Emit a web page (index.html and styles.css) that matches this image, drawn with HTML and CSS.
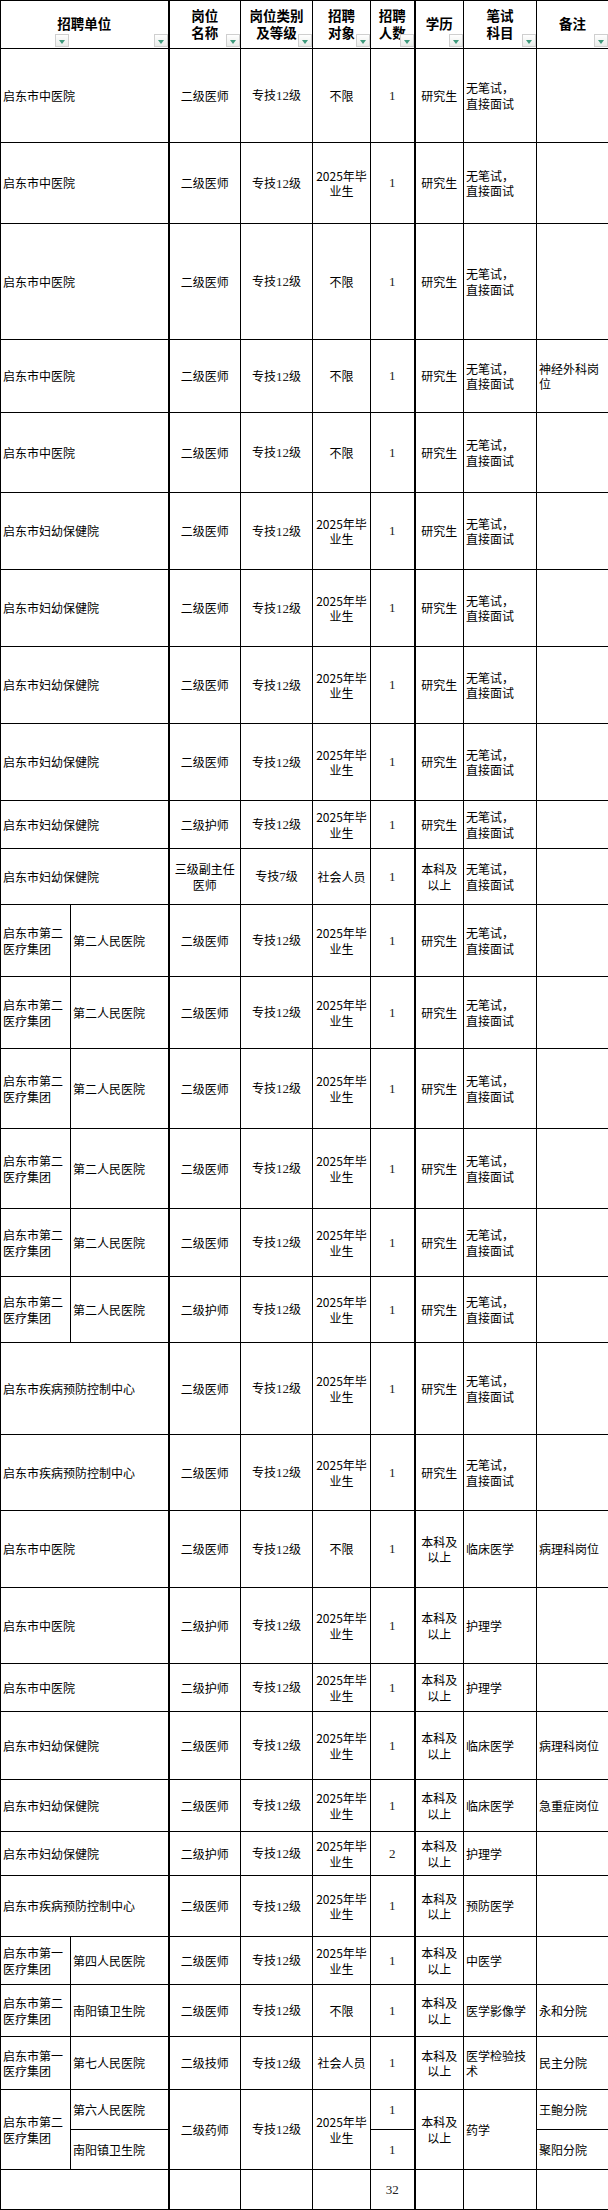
FILE: index.html
```html
<!DOCTYPE html>
<html lang="zh-CN">
<head>
<meta charset="utf-8">
<title>招聘岗位表</title>
<link rel="stylesheet" href="styles.css">
</head>
<body>
<table class="grid">
  <colgroup>
    <col class="ca">
    <col class="cb">
    <col class="cc thick">
    <col class="cd">
    <col class="ce">
    <col class="cf">
    <col class="cg thick">
    <col class="ch">
    <col class="ci">
  </colgroup>
  <thead>
    <tr class="h48">
      <th colspan="2">招聘单位<span class="flt flt-a"></span><span class="flt"></span></th>
      <th>岗位<br>名称<span class="flt"></span></th>
      <th>岗位类别<br>及等级<span class="flt"></span></th>
      <th>招聘<br>对象<span class="flt"></span></th>
      <th>招聘<br>人数<span class="flt"></span></th>
      <th>学历<span class="flt"></span></th>
      <th>笔试<br>科目<span class="flt"></span></th>
      <th>备注<span class="flt"></span></th>
    </tr>
  </thead>
  <tbody>
    <tr class="h94"><td class="l" colspan="2">启东市中医院</td><td>二级医师</td><td>专技<span class="n">12</span>级</td><td>不限</td><td class="n">1</td><td>研究生</td><td class="l">无笔试，<br>直接面试</td><td class="l"></td></tr>
    <tr class="h81"><td class="l" colspan="2">启东市中医院</td><td>二级医师</td><td>专技<span class="n">12</span>级</td><td>2025年毕<br>业生</td><td class="n">1</td><td>研究生</td><td class="l">无笔试，<br>直接面试</td><td class="l"></td></tr>
    <tr class="h116"><td class="l" colspan="2">启东市中医院</td><td>二级医师</td><td>专技<span class="n">12</span>级</td><td>不限</td><td class="n">1</td><td>研究生</td><td class="l">无笔试，<br>直接面试</td><td class="l"></td></tr>
    <tr class="h73"><td class="l" colspan="2">启东市中医院</td><td>二级医师</td><td>专技<span class="n">12</span>级</td><td>不限</td><td class="n">1</td><td>研究生</td><td class="l">无笔试，<br>直接面试</td><td class="l">神经外科岗<br>位</td></tr>
    <tr class="h80"><td class="l" colspan="2">启东市中医院</td><td>二级医师</td><td>专技<span class="n">12</span>级</td><td>不限</td><td class="n">1</td><td>研究生</td><td class="l">无笔试，<br>直接面试</td><td class="l"></td></tr>
    <tr class="h77"><td class="l" colspan="2">启东市妇幼保健院</td><td>二级医师</td><td>专技<span class="n">12</span>级</td><td>2025年毕<br>业生</td><td class="n">1</td><td>研究生</td><td class="l">无笔试，<br>直接面试</td><td class="l"></td></tr>
    <tr class="h77"><td class="l" colspan="2">启东市妇幼保健院</td><td>二级医师</td><td>专技<span class="n">12</span>级</td><td>2025年毕<br>业生</td><td class="n">1</td><td>研究生</td><td class="l">无笔试，<br>直接面试</td><td class="l"></td></tr>
    <tr class="h77"><td class="l" colspan="2">启东市妇幼保健院</td><td>二级医师</td><td>专技<span class="n">12</span>级</td><td>2025年毕<br>业生</td><td class="n">1</td><td>研究生</td><td class="l">无笔试，<br>直接面试</td><td class="l"></td></tr>
    <tr class="h77"><td class="l" colspan="2">启东市妇幼保健院</td><td>二级医师</td><td>专技<span class="n">12</span>级</td><td>2025年毕<br>业生</td><td class="n">1</td><td>研究生</td><td class="l">无笔试，<br>直接面试</td><td class="l"></td></tr>
    <tr class="h48"><td class="l" colspan="2">启东市妇幼保健院</td><td>二级护师</td><td>专技<span class="n">12</span>级</td><td>2025年毕<br>业生</td><td class="n">1</td><td>研究生</td><td class="l">无笔试，<br>直接面试</td><td class="l"></td></tr>
    <tr class="h56"><td class="l" colspan="2">启东市妇幼保健院</td><td>三级副主任<br>医师</td><td>专技<span class="n">7</span>级</td><td>社会人员</td><td class="n">1</td><td>本科及<br>以上</td><td class="l">无笔试，<br>直接面试</td><td class="l"></td></tr>
    <tr class="h72"><td class="l">启东市第二<br>医疗集团</td><td class="l">第二人民医院</td><td>二级医师</td><td>专技<span class="n">12</span>级</td><td>2025年毕<br>业生</td><td class="n">1</td><td>研究生</td><td class="l">无笔试，<br>直接面试</td><td class="l"></td></tr>
    <tr class="h72"><td class="l">启东市第二<br>医疗集团</td><td class="l">第二人民医院</td><td>二级医师</td><td>专技<span class="n">12</span>级</td><td>2025年毕<br>业生</td><td class="n">1</td><td>研究生</td><td class="l">无笔试，<br>直接面试</td><td class="l"></td></tr>
    <tr class="h80"><td class="l">启东市第二<br>医疗集团</td><td class="l">第二人民医院</td><td>二级医师</td><td>专技<span class="n">12</span>级</td><td>2025年毕<br>业生</td><td class="n">1</td><td>研究生</td><td class="l">无笔试，<br>直接面试</td><td class="l"></td></tr>
    <tr class="h80"><td class="l">启东市第二<br>医疗集团</td><td class="l">第二人民医院</td><td>二级医师</td><td>专技<span class="n">12</span>级</td><td>2025年毕<br>业生</td><td class="n">1</td><td>研究生</td><td class="l">无笔试，<br>直接面试</td><td class="l"></td></tr>
    <tr class="h68"><td class="l">启东市第二<br>医疗集团</td><td class="l">第二人民医院</td><td>二级医师</td><td>专技<span class="n">12</span>级</td><td>2025年毕<br>业生</td><td class="n">1</td><td>研究生</td><td class="l">无笔试，<br>直接面试</td><td class="l"></td></tr>
    <tr class="h66"><td class="l">启东市第二<br>医疗集团</td><td class="l">第二人民医院</td><td>二级护师</td><td>专技<span class="n">12</span>级</td><td>2025年毕<br>业生</td><td class="n">1</td><td>研究生</td><td class="l">无笔试，<br>直接面试</td><td class="l"></td></tr>
    <tr class="h92"><td class="l" colspan="2">启东市疾病预防控制中心</td><td>二级医师</td><td>专技<span class="n">12</span>级</td><td>2025年毕<br>业生</td><td class="n">1</td><td>研究生</td><td class="l">无笔试，<br>直接面试</td><td class="l"></td></tr>
    <tr class="h76"><td class="l" colspan="2">启东市疾病预防控制中心</td><td>二级医师</td><td>专技<span class="n">12</span>级</td><td>2025年毕<br>业生</td><td class="n">1</td><td>研究生</td><td class="l">无笔试，<br>直接面试</td><td class="l"></td></tr>
    <tr class="h77"><td class="l" colspan="2">启东市中医院</td><td>二级医师</td><td>专技<span class="n">12</span>级</td><td>不限</td><td class="n">1</td><td>本科及<br>以上</td><td class="l">临床医学</td><td class="l">病理科岗位</td></tr>
    <tr class="h76"><td class="l" colspan="2">启东市中医院</td><td>二级护师</td><td>专技<span class="n">12</span>级</td><td>2025年毕<br>业生</td><td class="n">1</td><td>本科及<br>以上</td><td class="l">护理学</td><td class="l"></td></tr>
    <tr class="h48"><td class="l" colspan="2">启东市中医院</td><td>二级护师</td><td>专技<span class="n">12</span>级</td><td>2025年毕<br>业生</td><td class="n">1</td><td>本科及<br>以上</td><td class="l">护理学</td><td class="l"></td></tr>
    <tr class="h68"><td class="l" colspan="2">启东市妇幼保健院</td><td>二级医师</td><td>专技<span class="n">12</span>级</td><td>2025年毕<br>业生</td><td class="n">1</td><td>本科及<br>以上</td><td class="l">临床医学</td><td class="l">病理科岗位</td></tr>
    <tr class="h52"><td class="l" colspan="2">启东市妇幼保健院</td><td>二级医师</td><td>专技<span class="n">12</span>级</td><td>2025年毕<br>业生</td><td class="n">1</td><td>本科及<br>以上</td><td class="l">临床医学</td><td class="l">急重症岗位</td></tr>
    <tr class="h44"><td class="l" colspan="2">启东市妇幼保健院</td><td>二级护师</td><td>专技<span class="n">12</span>级</td><td>2025年毕<br>业生</td><td class="n">2</td><td>本科及<br>以上</td><td class="l">护理学</td><td class="l"></td></tr>
    <tr class="h61"><td class="l" colspan="2">启东市疾病预防控制中心</td><td>二级医师</td><td>专技<span class="n">12</span>级</td><td>2025年毕<br>业生</td><td class="n">1</td><td>本科及<br>以上</td><td class="l">预防医学</td><td class="l"></td></tr>
    <tr class="h48"><td class="l">启东市第一<br>医疗集团</td><td class="l">第四人民医院</td><td>二级医师</td><td>专技<span class="n">12</span>级</td><td>2025年毕<br>业生</td><td class="n">1</td><td>本科及<br>以上</td><td class="l">中医学</td><td class="l"></td></tr>
    <tr class="h52"><td class="l">启东市第二<br>医疗集团</td><td class="l">南阳镇卫生院</td><td>二级医师</td><td>专技<span class="n">12</span>级</td><td>不限</td><td class="n">1</td><td>本科及<br>以上</td><td class="l">医学影像学</td><td class="l">永和分院</td></tr>
    <tr class="h53"><td class="l">启东市第一<br>医疗集团</td><td class="l">第七人民医院</td><td>二级技师</td><td>专技<span class="n">12</span>级</td><td>社会人员</td><td class="n">1</td><td>本科及<br>以上</td><td class="l">医学检验技<br>术</td><td class="l">民主分院</td></tr>
    <tr class="h40"><td class="l" rowspan="2">启东市第二<br>医疗集团</td><td class="l">第六人民医院</td><td rowspan="2">二级药师</td><td rowspan="2">专技<span class="n">12</span>级</td><td rowspan="2">2025年毕<br>业生</td><td class="n">1</td><td rowspan="2">本科及<br>以上</td><td class="l" rowspan="2">药学</td><td class="l">王鲍分院</td></tr>
    <tr class="h40"><td class="l">南阳镇卫生院</td><td class="n">1</td><td class="l">聚阳分院</td></tr>
    <tr class="h40"><td colspan="2"></td><td></td><td></td><td></td><td class="n">32</td><td></td><td></td><td></td></tr>
  </tbody>
</table>
</body>
</html>
```

FILE: styles.css
```css
html, body {
  margin: 0;
  padding: 0;
  background: #ffffff;
}

.grid {
  border-collapse: collapse;
  table-layout: fixed;
  width: 608px;
  font-family: "Noto Sans CJK SC", "Noto Sans", sans-serif;
  font-size: 12px;
  line-height: 15.5px;
  color: #000;
}

.ca { width: 70px; }
.cb { width: 98px; }
.cc { width: 72px; }
.cd { width: 72px; }
.ce { width: 58px; }
.cf { width: 44px; }
.cg { width: 49px; }
.ch { width: 73px; }
.ci { width: 72px; }

.thick { border-left: 2px solid #000; }

.grid th,
.grid td {
  border: 1px solid #000;
  padding: 0 2px;
  vertical-align: middle;
  text-align: center;
  white-space: nowrap;
  overflow: hidden;
}

.grid th {
  position: relative;
  font-weight: 700;
  font-size: 13.5px;
  line-height: 17px;
  padding-bottom: 2px;
  overflow: visible;
}

.grid td.l {
  text-align: left;
}

.n {
  font-family: "Liberation Serif", serif;
  font-size: 13px;
  color: #222;
}

.flt {
  position: absolute;
  right: 0;
  bottom: 1px;
  width: 12px;
  height: 11px;
  border: 1px solid #cfcfcf;
  background: linear-gradient(#ffffff, #e9ece9);
}

.flt::after {
  content: "";
  position: absolute;
  left: 3px;
  top: 5px;
  border-left: 3px solid transparent;
  border-right: 3px solid transparent;
  border-top: 4px solid #3f9a7c;
}

.flt-a {
  right: auto;
  left: 54px;
}

.h40 { height: 40px; }
.h44 { height: 44px; }
.h48 { height: 48px; }
.h52 { height: 52px; }
.h53 { height: 53px; }
.h56 { height: 56px; }
.h61 { height: 61px; }
.h66 { height: 66px; }
.h68 { height: 68px; }
.h72 { height: 72px; }
.h73 { height: 73px; }
.h76 { height: 76px; }
.h77 { height: 77px; }
.h80 { height: 80px; }
.h81 { height: 81px; }
.h92 { height: 92px; }
.h94 { height: 94px; }
.h116 { height: 116px; }
```
